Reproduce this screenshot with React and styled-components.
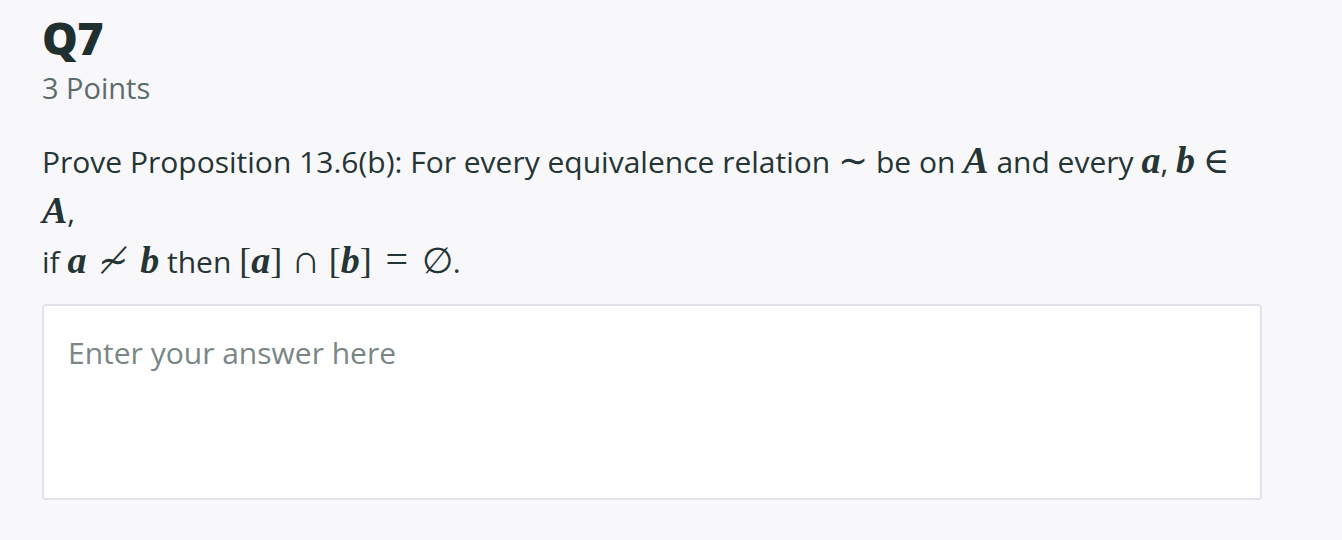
import React from "react";
import styled, { createGlobalStyle } from "styled-components";

const Global = createGlobalStyle`
  html, body { margin: 0; padding: 0; background: #f8f8fa; }
  body { font-family: "Open Sans", Inter, sans-serif; color: #253434; }
`;

const Page = styled.main`
  width: 1342px;
  height: 540px;
  box-sizing: border-box;
  padding: 11px 81px 0 42px;
  display: flex;
  flex-direction: column;
`;

const Title = styled.h2`
  margin: 0;
  font-size: 45px;
  line-height: 54px;
  font-weight: 800;
  letter-spacing: -0.5px;
  color: #1f3030;
`;

const Points = styled.div`
  margin-top: 5px;
  font-size: 29px;
  line-height: 36px;
  color: #5d6b6b;
`;

const Prompt = styled.div`
  margin-top: 31px;
  font-size: 30px;
  color: #253434;
`;

const Line = styled.div`
  line-height: 50px;
  height: 50px;
  white-space: nowrap;
`;

const Var = styled.span`
  font-family: "Liberation Serif", "DejaVu Serif", serif;
  font-style: italic;
  font-weight: 700;
  font-size: 38px;
  line-height: 0;
`;

const Sym = styled.span`
  font-family: "Liberation Serif", "DejaVu Serif", serif;
  font-weight: 400;
  font-size: ${(p) => p.$size || 36}px;
  line-height: 0;
  margin: 0 ${(p) => p.$gap || 0}px;
`;

const Answer = styled.textarea`
  margin-top: 17px;
  width: 1220px;
  height: 196px;
  box-sizing: border-box;
  border: 2px solid #e0e3e9;
  border-radius: 4px;
  background: #ffffff;
  padding: 26px 24px;
  font-family: "Open Sans", Inter, sans-serif;
  font-size: 30px;
  line-height: 42px;
  color: #253434;
  resize: none;
  outline: none;
  &::placeholder { color: #7a8686; }
`;

export default function App() {
  return (
    <>
      <Global />
      <Page>
        <Title>Q7</Title>
        <Points>3 Points</Points>
        <Prompt>
          <Line>
            Prove Proposition 13.6(b): For every equivalence relation <Sym>∼</Sym> be on{" "}
            <Var>A</Var> and every <Var>a</Var>, <Var>b</Var> <Sym>∈</Sym>
          </Line>
          <Line>
            <Var>A</Var>,
          </Line>
          <Line>
            if <Var>a</Var> <Sym $gap={4}>≁</Sym> <Var>b</Var> then <Sym>[</Sym>
            <Var>a</Var>
            <Sym>]</Sym> <Sym $size={40} $gap={1}>∩</Sym> <Sym>[</Sym>
            <Var>b</Var>
            <Sym>]</Sym> <Sym $size={40} $gap={6}>=</Sym> <Sym>∅</Sym>.
          </Line>
        </Prompt>
        <Answer placeholder="Enter your answer here" />
      </Page>
    </>
  );
}
